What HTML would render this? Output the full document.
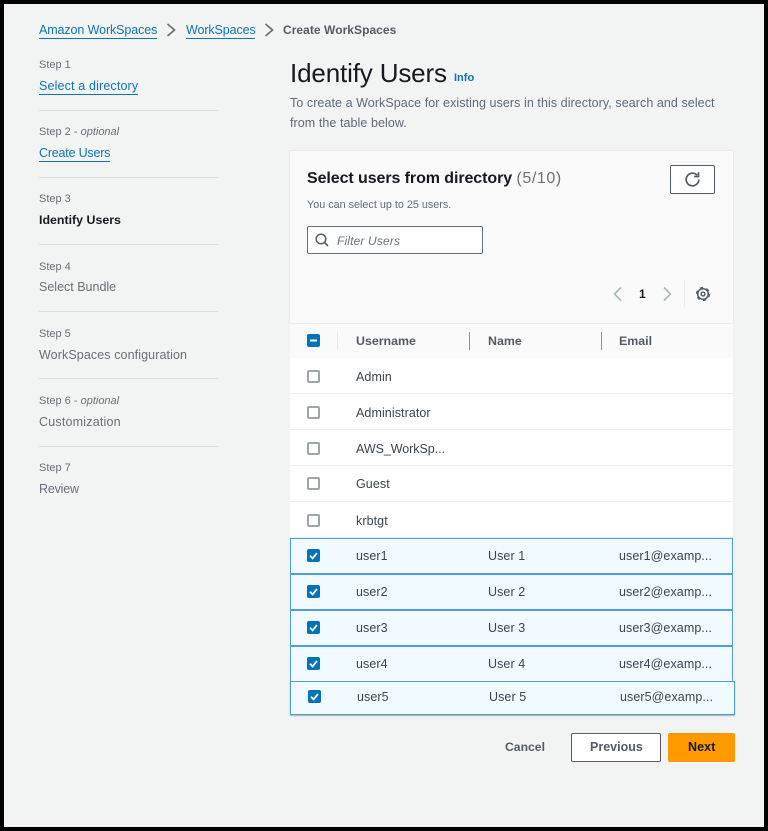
<!DOCTYPE html>
<html lang="en"><head><meta charset="utf-8"><title>Identify Users</title>
<style>
html,body{margin:0;padding:0;background:#000;}
body{width:768px;height:831px;overflow:hidden;position:relative;font-family:"Liberation Sans",sans-serif;}
#p{position:absolute;left:4px;top:4px;width:760px;height:823px;background:#f2f3f3;}
#w{position:absolute;left:0;top:0;width:768px;height:831px;filter:blur(.3px);}
.t{position:absolute;white-space:nowrap;line-height:18px;height:18px;font-size:12.5px;color:#16191f;}
.a{color:#0f73bb;}
.u{position:absolute;height:1px;background:#0f73bb;}
.g{color:#5f6b7a;}
.s{font-size:11px;color:#687078;}
.d{color:#687078;}
.hr{position:absolute;left:39px;width:179px;height:1px;background:#d9dee0;}
.r{position:absolute;left:290px;width:443px;height:35px;background:#fff;border-bottom:1px solid #eaeded;}
.sel{position:absolute;left:290px;width:441px;height:34px;background:#f1faff;border:1px solid #4c9fd8;}
.cb{position:absolute;left:307px;width:13px;height:13px;box-sizing:border-box;border:2px solid #9ea6ad;border-radius:2px;background:#fff;}
.ck{position:absolute;left:307px;width:13px;height:13px;border-radius:2px;background:#0073bb;}
.ck svg{position:absolute;left:0;top:0;}
.c{font-size:12.5px;color:#3b4550;letter-spacing:.08px;}
.b{font-weight:700;}
</style></head><body>
<div id="p"></div>
<div id="w">
<div class="t a" style="left:39px;top:21px;letter-spacing:-.1px">Amazon WorkSpaces</div><div class="u" style="left:39px;top:38px;width:118px"></div>
<svg style="position:absolute;left:165px;top:23px" width="12" height="14"><path d="M2.5 1L9.5 7L2.5 13" fill="none" stroke="#687078" stroke-width="1.7"/></svg>
<div class="t a" style="left:186px;top:21px;letter-spacing:-.1px">WorkSpaces</div><div class="u" style="left:186px;top:38px;width:69px"></div>
<svg style="position:absolute;left:263px;top:23px" width="12" height="14"><path d="M2.5 1L9.5 7L2.5 13" fill="none" stroke="#687078" stroke-width="1.7"/></svg>
<div class="t b" style="left:283px;top:21px;color:#545b64;font-size:12px;letter-spacing:.05px">Create WorkSpaces</div>

<div class="t s" style="left:39px;top:56px">Step 1</div>
<div class="t a" style="left:39px;top:77px;letter-spacing:.15px">Select a directory</div><div class="u" style="left:39px;top:94px;width:99px"></div>
<div class="hr" style="top:110px"></div>
<div class="t s" style="left:39px;top:123px">Step 2 - <i>optional</i></div>
<div class="t a" style="left:39px;top:144px;letter-spacing:-.2px">Create Users</div><div class="u" style="left:39px;top:161px;width:71px"></div>
<div class="hr" style="top:177px"></div>
<div class="t s" style="left:39px;top:190px">Step 3</div>
<div class="t b" style="left:39px;top:211px;font-size:12.4px">Identify Users</div>
<div class="hr" style="top:244px"></div>
<div class="t s" style="left:39px;top:258px">Step 4</div>
<div class="t d" style="left:39px;top:278px">Select Bundle</div>
<div class="hr" style="top:311px"></div>
<div class="t s" style="left:39px;top:325px">Step 5</div>
<div class="t d" style="left:39px;top:346px;letter-spacing:.1px">WorkSpaces configuration</div>
<div class="hr" style="top:378px"></div>
<div class="t s" style="left:39px;top:392px">Step 6 - <i>optional</i></div>
<div class="t d" style="left:39px;top:413px;letter-spacing:.2px">Customization</div>
<div class="hr" style="top:446px"></div>
<div class="t s" style="left:39px;top:459px">Step 7</div>
<div class="t d" style="left:39px;top:480px;letter-spacing:-.2px">Review</div>

<div class="t" style="left:290px;top:58px;height:30px;line-height:30px;font-size:26px;letter-spacing:-.15px">Identify Users</div>
<div class="t a b" style="left:454px;top:69px;font-size:11px">Info</div>
<div class="t g" style="left:290px;top:94px;font-size:12.5px;letter-spacing:.07px">To create a WorkSpace for existing users in this directory, search and select</div>
<div class="t g" style="left:290px;top:114px;font-size:12.5px;letter-spacing:.07px">from the table below.</div>

<div style="position:absolute;left:290px;top:151px;width:443px;height:172px;background:#fafafa;box-shadow:0 0 1px rgba(0,28,36,.2)"></div>
<div class="t b" style="left:307px;top:170px;font-size:16px;letter-spacing:-.08px">Select users from directory <span style="font-weight:400;color:#687078;letter-spacing:.6px">(5/10)</span></div>
<div class="t g" style="left:307px;top:196px;font-size:10.8px">You can select up to 25 users.</div>

<div style="position:absolute;left:670px;top:165px;width:43px;height:27px;border:1px solid #545b64;border-radius:2px;background:#fff"></div>
<svg style="position:absolute;left:684px;top:170px" width="18" height="18" viewBox="0 0 18 18"><path d="M14.8 9.5a6.3 6.3 0 1 1-1.8-4.4" fill="none" stroke="#545b64" stroke-width="1.7"/><path d="M14.5 2.2v4.3h-4.3" fill="none" stroke="#545b64" stroke-width="1.7"/></svg>

<div style="position:absolute;left:307px;top:226px;width:174px;height:26px;border:1px solid #687078;border-radius:2px;background:#fff"></div>
<svg style="position:absolute;left:314px;top:232px" width="16" height="16" viewBox="0 0 16 16"><circle cx="7" cy="7" r="4.8" fill="none" stroke="#545b64" stroke-width="1.5"/><path d="M10.5 10.5L14 14" stroke="#545b64" stroke-width="1.6"/></svg>
<div class="t" style="left:337px;top:232px;font-size:12px;font-style:italic;color:#687078;letter-spacing:.15px">Filter Users</div>

<svg style="position:absolute;left:611px;top:286px" width="14" height="16"><path d="M10 1.5L3.5 8L10 14.5" fill="none" stroke="#aab7b8" stroke-width="1.6"/></svg>
<div class="t b" style="left:639px;top:285px;font-size:12px">1</div>
<svg style="position:absolute;left:660px;top:286px" width="14" height="16"><path d="M4 1.5L10.5 8L4 14.5" fill="none" stroke="#aab7b8" stroke-width="1.6"/></svg>
<div style="position:absolute;left:684px;top:280px;width:1px;height:28px;background:#eaeded"></div>
<svg style="position:absolute;left:695px;top:286px" width="16" height="16" viewBox="0 0 16 16"><circle cx="8" cy="8" r="5.3" fill="none" stroke="#545b64" stroke-width="1.5"/><circle cx="8" cy="8" r="6.5" fill="none" stroke="#545b64" stroke-width="1.2" stroke-dasharray="3.4 3.4"/><circle cx="8" cy="8" r="1.9" fill="none" stroke="#545b64" stroke-width="1.4"/></svg>

<div style="position:absolute;left:290px;top:323px;width:443px;height:35px;background:#fafafa;border-top:1px solid #eaeded;box-sizing:border-box"></div>
<div class="ck" style="top:334px"><svg width="13" height="13"><path d="M3 6.5h7" stroke="#fff" stroke-width="2"/></svg></div>
<div style="position:absolute;left:337px;top:332px;width:1px;height:18px;background:#e6e9ea"></div>
<div style="position:absolute;left:469px;top:332px;width:1px;height:18px;background:#879596"></div>
<div style="position:absolute;left:601px;top:332px;width:1px;height:18px;background:#879596"></div>
<div class="t b" style="left:356px;top:332px;font-size:12.4px;color:#545b64">Username</div>
<div class="t b" style="left:488px;top:332px;font-size:12.4px;color:#545b64">Name</div>
<div class="t b" style="left:619px;top:332px;font-size:12.4px;color:#545b64">Email</div>

<div class="r" style="top:358px"></div><div class="cb" style="top:370px"></div><div class="t c" style="left:356px;top:368px">Admin</div>
<div class="r" style="top:394px"></div><div class="cb" style="top:406px"></div><div class="t c" style="left:356px;top:404px">Administrator</div>
<div class="r" style="top:430px"></div><div class="cb" style="top:442px"></div><div class="t c" style="left:356px;top:440px;letter-spacing:-.05px">AWS_WorkSp...</div>
<div class="r" style="top:466px"></div><div class="cb" style="top:477px"></div><div class="t c" style="left:356px;top:475px">Guest</div>
<div class="r" style="top:502px"></div><div class="cb" style="top:514px"></div><div class="t c" style="left:356px;top:512px">krbtgt</div>

<div class="sel" style="top:538px"></div>
<div class="ck" style="top:549px"><svg width="13" height="13"><path d="M3 6.8L5.6 9.4L10 4" fill="none" stroke="#fff" stroke-width="1.8"/></svg></div>
<div class="t c" style="left:356px;top:547px">user1</div><div class="t c" style="left:488px;top:547px">User 1</div><div class="t c" style="left:619px;top:547px">user1@examp...</div>
<div class="sel" style="top:574px"></div>
<div class="ck" style="top:585px"><svg width="13" height="13"><path d="M3 6.8L5.6 9.4L10 4" fill="none" stroke="#fff" stroke-width="1.8"/></svg></div>
<div class="t c" style="left:356px;top:583px">user2</div><div class="t c" style="left:488px;top:583px">User 2</div><div class="t c" style="left:619px;top:583px">user2@examp...</div>
<div class="sel" style="top:610px"></div>
<div class="ck" style="top:621px"><svg width="13" height="13"><path d="M3 6.8L5.6 9.4L10 4" fill="none" stroke="#fff" stroke-width="1.8"/></svg></div>
<div class="t c" style="left:356px;top:619px">user3</div><div class="t c" style="left:488px;top:619px">User 3</div><div class="t c" style="left:619px;top:619px">user3@examp...</div>
<div class="sel" style="top:646px"></div>
<div class="ck" style="top:657px"><svg width="13" height="13"><path d="M3 6.8L5.6 9.4L10 4" fill="none" stroke="#fff" stroke-width="1.8"/></svg></div>
<div class="t c" style="left:356px;top:655px">user4</div><div class="t c" style="left:488px;top:655px">User 4</div><div class="t c" style="left:619px;top:655px">user4@examp...</div>
<div class="sel" style="top:681px;left:290px;width:443px;height:32px;box-shadow:0 1px 1px rgba(0,28,36,.3)"></div>
<div class="ck" style="top:690px;left:308px"><svg width="13" height="13"><path d="M3 6.8L5.6 9.4L10 4" fill="none" stroke="#fff" stroke-width="1.8"/></svg></div>
<div class="t c" style="left:357px;top:688px">user5</div><div class="t c" style="left:489px;top:688px">User 5</div><div class="t c" style="left:620px;top:688px">user5@examp...</div>

<div class="t b" style="left:505px;top:738px;font-size:12.2px;color:#545b64">Cancel</div>
<div style="position:absolute;left:571px;top:733px;width:88px;height:27px;border:1px solid #545b64;border-radius:2px;background:#fff"></div>
<div class="t b" style="left:590px;top:738px;font-size:12.5px;color:#545b64">Previous</div>
<div style="position:absolute;left:668px;top:733px;width:67px;height:29px;border-radius:2px;background:#ff9900"></div>
<div class="t b" style="left:688px;top:738px;font-size:12.5px;letter-spacing:.1px">Next</div>
</div>
</body></html>
